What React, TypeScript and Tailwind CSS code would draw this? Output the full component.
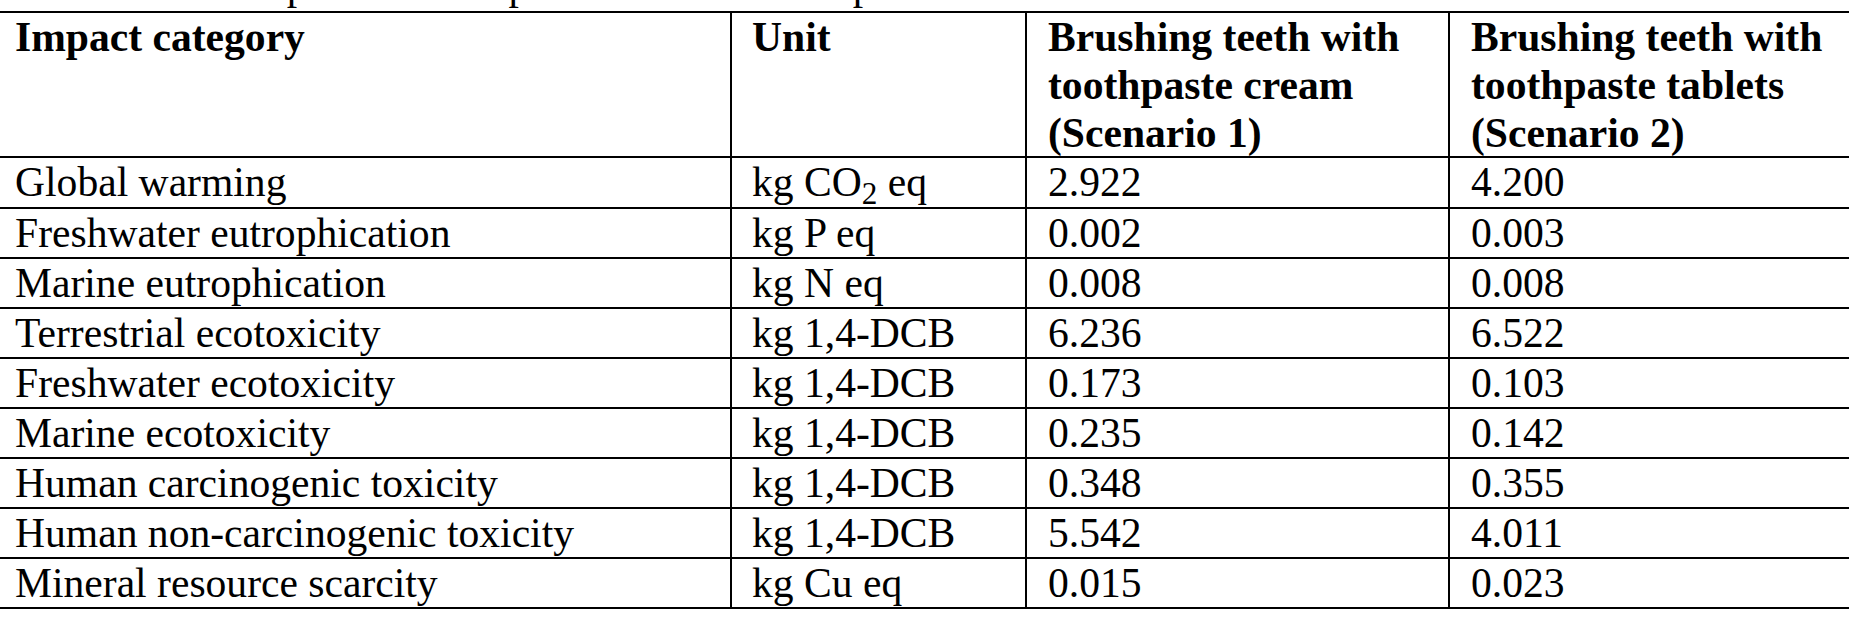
import type { ReactNode } from "react"

type Row = {
  category: string
  unit: ReactNode
  cream: string
  tablets: string
}

const DCB = "kg 1,4-DCB"

const rows: Row[] = [
  {
    category: "Global warming",
    unit: (
      <>
        kg CO<sub>2</sub> eq
      </>
    ),
    cream: "2.922",
    tablets: "4.200",
  },
  { category: "Freshwater eutrophication", unit: "kg P eq", cream: "0.002", tablets: "0.003" },
  { category: "Marine eutrophication", unit: "kg N eq", cream: "0.008", tablets: "0.008" },
  { category: "Terrestrial ecotoxicity", unit: DCB, cream: "6.236", tablets: "6.522" },
  { category: "Freshwater ecotoxicity", unit: DCB, cream: "0.173", tablets: "0.103" },
  { category: "Marine ecotoxicity", unit: DCB, cream: "0.235", tablets: "0.142" },
  { category: "Human carcinogenic toxicity", unit: DCB, cream: "0.348", tablets: "0.355" },
  { category: "Human non-carcinogenic toxicity", unit: DCB, cream: "5.542", tablets: "4.011" },
  { category: "Mineral resource scarcity", unit: "kg Cu eq", cream: "0.015", tablets: "0.023" },
]

const grid = "grid grid-cols-[730px_295px_423px_1fr] border-t-2 border-black"

const App = () => {
  return (
    <div className="min-h-[617px] w-full bg-white font-[family-name:'Liberation_Serif','Times_New_Roman',serif] text-[41.6px] leading-[48px] text-black">
      {/* caption line sits above the crop, only descenders show */}
      <div className="h-[11px] overflow-hidden">
        <p className="mt-[-39px] whitespace-nowrap pl-[62px]">
          Table 4. Comparison of impact of the two toothpaste forms
        </p>
      </div>

      <div className="border-b-2 border-black">
        <div className={`${grid} h-[145px] font-bold`}>
          <div className="pl-[15px]">Impact category</div>
          <div className="border-l-2 border-black pl-[20px]">Unit</div>
          <div className="border-l-2 border-black pl-[21px]">
            Brushing teeth with
            <br />
            toothpaste cream
            <br />
            (Scenario 1)
          </div>
          <div className="border-l-2 border-black pl-[21px]">
            Brushing teeth with
            <br />
            toothpaste tablets
            <br />
            (Scenario 2)
          </div>
        </div>

        {rows.map((row, i) => (
          <div key={row.category} className={`${grid} ${i === 0 ? "h-[51px]" : "h-[50px]"}`}>
            <div className="whitespace-nowrap pl-[15px]">{row.category}</div>
            <div className="whitespace-nowrap border-l-2 border-black pl-[20px]">{row.unit}</div>
            <div className="border-l-2 border-black pl-[21px]">{row.cream}</div>
            <div className="border-l-2 border-black pl-[21px]">{row.tablets}</div>
          </div>
        ))}
      </div>
    </div>
  )
}

export default App
